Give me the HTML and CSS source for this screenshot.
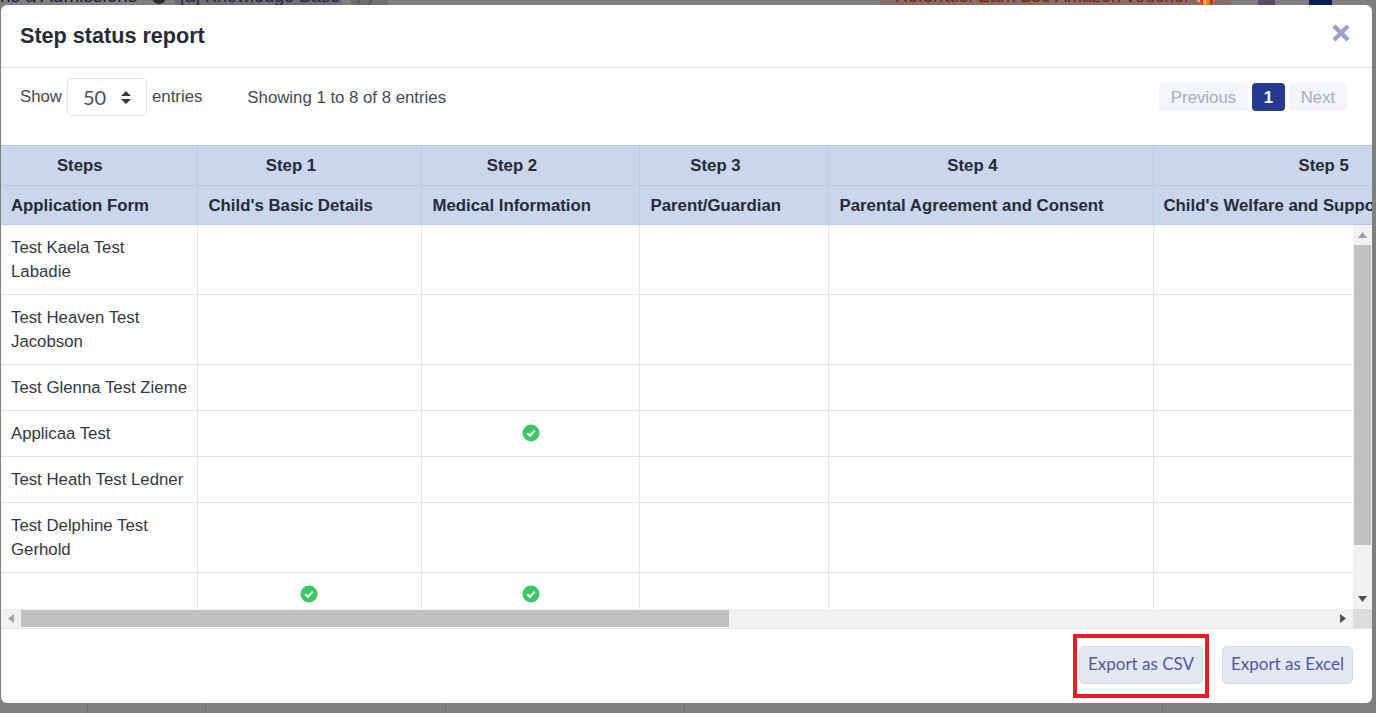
FILE: index.html
```html
<!DOCTYPE html>
<html>
<head>
    <title>Step status report</title>
    <meta name="viewport" content="width=device-width, initial-scale=1">
    <link rel="stylesheet" href="styles.css">
</head>
<body>
    <div class="backTop">
        <span class="backNav">ns a Admissions</span>
        <span class="backDot"></span>
        <span class="backChip">[a] Knowledge Base</span>
        <span class="backChip small">( )</span>
        <span class="backPromo">Referrals! Earn £30 Amazon voucher 🎁</span>
        <span class="backIcon one"></span>
        <span class="backIcon two"></span>
    </div>

    <main class="modal">
        <header class="modalHeader">
            <h1>Step status report</h1>
            <svg class="closeIcon" width="20" height="20" viewBox="0 0 20 20">
                <path d="M3 3 L17 17 M17 3 L3 17" stroke="#98a3cc" stroke-width="4.4" fill="none"/>
            </svg>
        </header>

        <section class="toolbar">
            <div class="lengthControl">
                <span>Show</span>
                <div class="selectBox">
                    <span>50</span>
                    <svg width="10" height="13" viewBox="0 0 10 13">
                        <path d="M5 0 L10 5 L0 5 Z M0 8 L10 8 L5 13 Z" fill="#343a4a"/>
                    </svg>
                </div>
                <span>entries</span>
            </div>
            <div class="info">Showing 1 to 8 of 8 entries</div>
            <nav class="pager">
                <span class="pageBtn prev">Previous</span>
                <span class="pageBtn current">1</span>
                <span class="pageBtn next">Next</span>
            </nav>
        </section>

        <section class="tableArea">
            <table>
                <thead>
                    <tr class="stepRow">
                        <th class="colName">Steps</th>
                        <th class="col1">Step 1</th>
                        <th class="col2">Step 2</th>
                        <th class="col3">Step 3</th>
                        <th class="col4">Step 4</th>
                        <th class="col5">Step 5</th>
                    </tr>
                    <tr class="formRow">
                        <th>Application Form</th>
                        <th>Child's Basic Details</th>
                        <th>Medical Information</th>
                        <th>Parent/Guardian</th>
                        <th>Parental Agreement and Consent</th>
                        <th>Child's Welfare and Support</th>
                    </tr>
                </thead>
                <tbody>
                    <tr class="tall"><td>Test Kaela Test<br>Labadie</td><td></td><td></td><td></td><td></td><td></td></tr>
                    <tr class="tall"><td>Test Heaven Test<br>Jacobson</td><td></td><td></td><td></td><td></td><td></td></tr>
                    <tr><td>Test Glenna Test Zieme</td><td></td><td></td><td></td><td></td><td></td></tr>
                    <tr>
                        <td>Applicaa Test</td>
                        <td></td>
                        <td class="done"><svg width="18" height="18" viewBox="0 0 18 18"><circle cx="9" cy="9" r="8.5" fill="#3cc765"/><path d="M5.2 9.3 L7.9 11.8 L12.8 6.6" stroke="#fff" stroke-width="2" fill="none"/></svg></td>
                        <td></td><td></td><td></td>
                    </tr>
                    <tr><td>Test Heath Test Ledner</td><td></td><td></td><td></td><td></td><td></td></tr>
                    <tr class="tall"><td>Test Delphine Test<br>Gerhold</td><td></td><td></td><td></td><td></td><td></td></tr>
                    <tr class="tall lastRow">
                        <td></td>
                        <td class="done first"><svg width="18" height="18" viewBox="0 0 18 18"><circle cx="9" cy="9" r="8.5" fill="#3cc765"/><path d="M5.2 9.3 L7.9 11.8 L12.8 6.6" stroke="#fff" stroke-width="2" fill="none"/></svg></td>
                        <td class="done"><svg width="18" height="18" viewBox="0 0 18 18"><circle cx="9" cy="9" r="8.5" fill="#3cc765"/><path d="M5.2 9.3 L7.9 11.8 L12.8 6.6" stroke="#fff" stroke-width="2" fill="none"/></svg></td>
                        <td></td><td></td><td></td>
                    </tr>
                </tbody>
            </table>
            <div class="vScroll">
                <svg class="arrow" width="9" height="6" viewBox="0 0 9 6"><path d="M4.5 0 L9 6 L0 6 Z" fill="#a3a3a3"/></svg>
                <div class="vThumb"></div>
                <svg class="arrow" width="9" height="6" viewBox="0 0 9 6"><path d="M0 0 L9 0 L4.5 6 Z" fill="#505050"/></svg>
            </div>
        </section>

        <div class="hScroll">
            <svg width="6" height="9" viewBox="0 0 6 9"><path d="M6 0 L6 9 L0 4.5 Z" fill="#a3a3a3"/></svg>
            <div class="hTrack"><div class="hThumb"></div></div>
            <svg width="6" height="9" viewBox="0 0 6 9"><path d="M0 0 L0 9 L6 4.5 Z" fill="#505050"/></svg>
            <div class="scrollCorner"></div>
        </div>

        <footer class="modalFooter">
            <button class="exportBtn csv">Export as CSV</button>
            <button class="exportBtn excel">Export as Excel</button>
            <div class="redBox"></div>
        </footer>
    </main>

    <div class="backBottom">
        <span class="backCell a"></span>
        <span class="backCell b"></span>
        <span class="backCell c"></span>
        <span class="backCell d"></span>
        <span class="backCell e"></span>
    </div>
</body>
</html>
```

FILE: styles.css
```css
* {
    box-sizing: border-box;
}

html, body {
    height: 713px;
    overflow: hidden;
}

body {
    margin: 0;
    background-color: #7f7f7f;
    color: #212529;
    font-family: "Liberation Sans", Arial, sans-serif;
    font-size: 16.8px;
}

/* dimmed page behind the modal */
.backTop {
    display: flex;
    align-items: flex-end;
    height: 5px;
    overflow: hidden;
    font-size: 18px;
    line-height: 18px;
    color: #161b3a;
}

.backNav {
    width: 152px;
    font-size: 19px;
    flex: none;
}

.backDot {
    width: 14px;
    height: 14px;
    margin: 0 0 1px 0;
    border-radius: 50%;
    background-color: #2a2a30;
    flex: none;
}

.backChip {
    width: 167px;
    margin-left: 9px;
    padding-left: 5px;
    background-color: #6e6e70;
    white-space: nowrap;
    flex: none;
    color: #20264a;
}

.backChip.small {
    color: #555;
    width: 37px;
    margin-left: 9px;
}

.backPromo {
    width: 351px;
    margin-left: 492px;
    padding-left: 15px;
    background-color: #856e68;
    color: #7e1f0c;
    white-space: nowrap;
    flex: none;
}

.backIcon {
    height: 5px;
    flex: none;
}

.backIcon.one {
    width: 17px;
    margin-left: 27px;
    background-color: #5b4a63;
}

.backIcon.two {
    width: 23px;
    margin-left: 34px;
    background-color: #101c55;
}

.backBottom {
    display: flex;
    height: 10px;
}

.backCell {
    border-right: 1px solid #6d6d6d;
    flex: none;
}

.backCell.a { width: 88px; }
.backCell.b { width: 118px; }
.backCell.c { width: 240px; }
.backCell.d { width: 239px; }
.backCell.e { width: 478px; }

/* modal */
.modal {
    display: flex;
    flex-direction: column;
    width: 1371px;
    height: 698px;
    margin-left: 1px;
    background-color: #fff;
    border-radius: 6px;
    overflow: hidden;
}

.modalHeader {
    display: flex;
    align-items: center;
    justify-content: space-between;
    height: 63px;
    padding: 0 21px 0 19px;
    border-bottom: 1px solid #dde3ee;
    flex: none;
}

.modalHeader h1 {
    margin: 0;
    font-size: 21.6px;
    font-weight: bold;
    color: #272b36;
}

.closeIcon {
    margin-bottom: 6px;
}

.toolbar {
    display: flex;
    align-items: flex-start;
    height: 77px;
    padding: 10px 25px 0 19px;
    flex: none;
    color: #454a55;
}

.lengthControl {
    display: flex;
    align-items: center;
    gap: 5px;
    height: 38px;
}

.selectBox {
    display: flex;
    align-items: center;
    justify-content: space-between;
    width: 80px;
    height: 38px;
    padding: 0 15px;
    border: 1px solid #dfe5f0;
    border-radius: 5px;
    font-family: Lato, sans-serif;
    font-size: 20px;
    color: #4a4f5a;
}

.info {
    margin-left: 45px;
    line-height: 40px;
}

.pager {
    display: flex;
    gap: 4px;
    margin-left: auto;
    margin-top: 5px;
}

.pageBtn {
    height: 28px;
    line-height: 30px;
    text-align: center;
    border-radius: 4px;
    background-color: #f3f5fa;
    color: #a8adb8;
}

.pageBtn.prev {
    width: 89px;
}

.pageBtn.current {
    width: 33px;
    background-color: #243a8f;
    color: #fff;
    font-weight: bold;
}

.pageBtn.next {
    width: 58px;
}

/* table */
.tableArea {
    position: relative;
    height: 464px;
    overflow: hidden;
    flex: none;
}

table {
    table-layout: fixed;
    width: 1499px;
    border-collapse: collapse;
}

th, td {
    border: 1px solid #e3e5ec;
    padding: 0 10px;
    overflow: hidden;
}

td:first-child, th:first-child {
    border-left: 0;
}

th {
    background-color: #c9d6ec;
    border-color: #bccbe4;
    color: #272b36;
    white-space: nowrap;
}

.stepRow th {
    height: 40px;
    padding: 0 47px 0 11px;
    text-align: center;
}

.stepRow th.colName {
    padding: 0 48px 0 10px;
}

.stepRow th.col5 {
    text-align: left;
    padding: 0 10px 0 145px;
}

.formRow th {
    height: 39px;
    padding: 2px 10px 0 11px;
    text-align: left;
}

.formRow th:first-child,
.formRow th:last-child {
    padding-left: 10px;
}

.colName { width: 196px; }
.col1 { width: 224px; }
.col2 { width: 218px; }
.col3 { width: 189px; }
.col4 { width: 325px; }
.col5 { width: 347px; }

tbody tr {
    height: 46px;
}

tbody tr.tall {
    height: 70px;
}

td {
    line-height: 24px;
    color: #343843;
    white-space: nowrap;
}

td.done {
    padding: 0 0 2px 100px;
    line-height: 0;
}

td.done.first {
    padding-left: 102px;
}

.lastRow td {
    vertical-align: top;
    padding-top: 12px;
}

.vScroll {
    position: absolute;
    top: 80px;
    right: 0;
    bottom: 0;
    display: flex;
    flex-direction: column;
    align-items: center;
    justify-content: space-between;
    width: 19px;
    padding: 7px 0;
    background-color: #f1f1f1;
}

.vThumb {
    position: absolute;
    top: 20px;
    left: 1px;
    width: 17px;
    height: 300px;
    background-color: #c1c1c1;
}

.hScroll {
    display: flex;
    align-items: center;
    height: 20px;
    padding-left: 7px;
    background-color: #f1f1f1;
    border-bottom: 1px solid #e6e6e6;
    flex: none;
}

.hTrack {
    width: 1317px;
    margin: 0 6px 0 7px;
}

.hThumb {
    width: 708px;
    height: 17px;
    background-color: #c1c1c1;
}

.scrollCorner {
    align-self: stretch;
    width: 19px;
    margin-left: 7px;
    background-color: #dcdcdc;
}

.modalFooter {
    position: relative;
    display: flex;
    justify-content: flex-end;
    gap: 19px;
    padding: 17px 19px 0 0;
    flex: 1;
}

.exportBtn {
    height: 38px;
    padding: 0 0 3px;
    border: 1px solid #d6dbe8;
    border-radius: 5px;
    background-color: #e4e7f0;
    color: #4a5ca3;
    font-family: Lato, sans-serif;
    font-size: 17px;
}

.exportBtn.csv {
    width: 124px;
}

.exportBtn.excel {
    width: 131px;
}

.redBox {
    position: absolute;
    top: 5px;
    left: 1072px;
    width: 136px;
    height: 64px;
    border: 4px solid #ed1c24;
}
```
